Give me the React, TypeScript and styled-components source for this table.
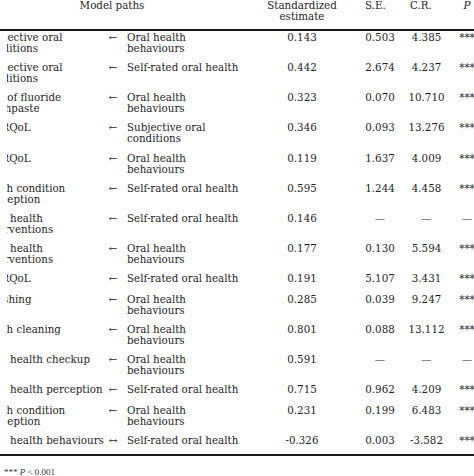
import React from "react";
import styled, { createGlobalStyle } from "styled-components";

const Global = createGlobalStyle`
  html, body { margin: 0; padding: 0; background: #ffffff; }
  body { overflow: hidden; }
  * { box-sizing: border-box; }
`;

const Page = styled.div`
  width: 474px;
  height: 476px;
  overflow: hidden;
  background: #ffffff;
  color: #1e1e1e;
  font-family: "DejaVu Serif", "Liberation Serif", serif;
  font-size: 10.3px;
  line-height: 11px;
`;

const Table = styled.div`
  width: 490px;
`;

const COLS = "97px 18px 123px 114px 42px 51px 30px";

const HeaderRow = styled.div`
  display: grid;
  grid-template-columns: ${COLS};
  padding-left: 7px;
  height: 31px;
  border-bottom: 2px solid #1a1a1a;
`;

const HeadCell = styled.div<{ $span?: number; $align?: string; $pad?: number; $padRight?: number; $italic?: boolean }>`
  grid-column: span ${(p) => p.$span ?? 1};
  text-align: ${(p) => p.$align ?? "center"};
  padding-left: ${(p) => p.$pad ?? 0}px;
  padding-right: ${(p) => p.$padRight ?? 0}px;
  font-style: ${(p) => (p.$italic ? "italic" : "normal")};
  white-space: nowrap;
`;

const Row = styled.div<{ $tall: boolean; $last?: boolean }>`
  display: grid;
  grid-template-columns: ${COLS};
  padding-left: 7px;
  height: ${(p) => (p.$tall ? 30.15 : 20.6) + (p.$last ? 2 : 0)}px;
  padding-top: 1px;
  align-items: start;
  border-bottom: ${(p) => (p.$last ? "2px solid #1a1a1a" : "none")};
`;

const NameCell = styled.div`
  overflow: hidden;
  white-space: nowrap;
  text-align: left;
`;

const NameText = styled.div`
  margin-left: -23px;
`;

const ArrowCell = styled.div`
  text-align: center;
`;

const PathCell = styled.div`
  padding-left: 5px;
  white-space: nowrap;
`;

const NumCell = styled.div`
  text-align: center;
  white-space: nowrap;
`;

const Footnote = styled.div`
  margin-top: 11px;
  padding-left: 4px;
  font-family: "Liberation Serif", serif;
  font-size: 9px;
  line-height: 10px;
  color: #333;
  white-space: nowrap;
`;

const Em = styled.span`
  font-style: italic;
`;

type R = {
  name: string[];
  arrow: string;
  path: string[];
  est: string;
  se: string;
  cr: string;
  p: string;
};

const rows: R[] = [
  { name: ["Subjective oral", "conditions"], arrow: "←", path: ["Oral health", "behaviours"], est: "0.143", se: "0.503", cr: "4.385", p: "***" },
  { name: ["Subjective oral", "conditions"], arrow: "←", path: ["Self-rated oral health"], est: "0.442", se: "2.674", cr: "4.237", p: "***" },
  { name: ["Use of fluoride", "toothpaste"], arrow: "←", path: ["Oral health", "behaviours"], est: "0.323", se: "0.070", cr: "10.710", p: "***" },
  { name: ["OHRQoL"], arrow: "←", path: ["Subjective oral", "conditions"], est: "0.346", se: "0.093", cr: "13.276", p: "***" },
  { name: ["OHRQoL"], arrow: "←", path: ["Oral health", "behaviours"], est: "0.119", se: "1.637", cr: "4.009", p: "***" },
  { name: ["Tooth condition", "perception"], arrow: "←", path: ["Self-rated oral health"], est: "0.595", se: "1.244", cr: "4.458", p: "***" },
  { name: ["Oral health", "interventions"], arrow: "←", path: ["Self-rated oral health"], est: "0.146", se: "—", cr: "—", p: "—" },
  { name: ["Oral health", "interventions"], arrow: "←", path: ["Oral health", "behaviours"], est: "0.177", se: "0.130", cr: "5.594", p: "***" },
  { name: ["OHRQoL"], arrow: "←", path: ["Self-rated oral health"], est: "0.191", se: "5.107", cr: "3.431", p: "***" },
  { name: ["Brushing"], arrow: "←", path: ["Oral health", "behaviours"], est: "0.285", se: "0.039", cr: "9.247", p: "***" },
  { name: ["Tooth cleaning"], arrow: "←", path: ["Oral health", "behaviours"], est: "0.801", se: "0.088", cr: "13.112", p: "***" },
  { name: ["Oral health checkup"], arrow: "←", path: ["Oral health", "behaviours"], est: "0.591", se: "—", cr: "—", p: "—" },
  { name: ["Oral health perception"], arrow: "←", path: ["Self-rated oral health"], est: "0.715", se: "0.962", cr: "4.209", p: "***" },
  { name: ["Tooth condition", "perception"], arrow: "←", path: ["Oral health", "behaviours"], est: "0.231", se: "0.199", cr: "6.483", p: "***" },
  { name: ["Oral health behaviours"], arrow: "↔", path: ["Self-rated oral health"], est: "-0.326", se: "0.003", cr: "-3.582", p: "***" },
];

const Lines = ({ lines }: { lines: string[] }) => (
  <>
    {lines.map((l, i) => (
      <React.Fragment key={i}>
        {i > 0 && <br />}
        {l}
      </React.Fragment>
    ))}
  </>
);

export default function App() {
  return (
    <Page>
      <Global />
      <Table>
        <HeaderRow>
          <HeadCell $span={3} $padRight={28}>Model paths</HeadCell>
          <HeadCell>
            Standardized
            <br />
            estimate
          </HeadCell>
          <HeadCell $align="left" $pad={6}>S.E.</HeadCell>
          <HeadCell $align="left" $pad={9}>C.R.</HeadCell>
          <HeadCell $italic>P</HeadCell>
        </HeaderRow>
        {rows.map((r, i) => {
          const tall = r.name.length > 1 || r.path.length > 1;
          return (
            <Row key={i} $tall={tall} $last={i === rows.length - 1}>
              <NameCell>
                <NameText>
                  <Lines lines={r.name} />
                </NameText>
              </NameCell>
              <ArrowCell>{r.arrow}</ArrowCell>
              <PathCell>
                <Lines lines={r.path} />
              </PathCell>
              <NumCell>{r.est}</NumCell>
              <NumCell>{r.se}</NumCell>
              <NumCell>{r.cr}</NumCell>
              <NumCell>{r.p}</NumCell>
            </Row>
          );
        })}
      </Table>
      <Footnote>
        *** <Em>P</Em> &lt; 0.001
      </Footnote>
    </Page>
  );
}
